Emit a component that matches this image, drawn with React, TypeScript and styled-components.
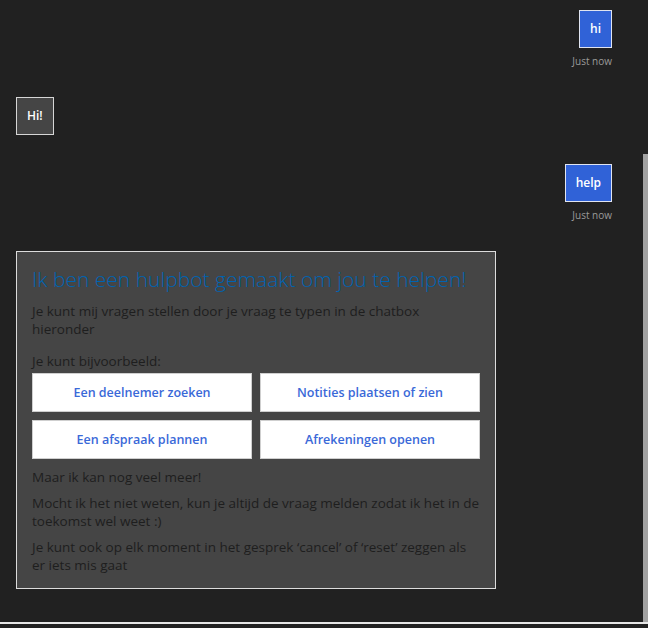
import React from "react";
import styled, { createGlobalStyle } from "styled-components";

const GlobalStyle = createGlobalStyle`
    html, body {
        margin: 0;
        padding: 0;
        background: #212121;
        font-family: "Open Sans", "Noto Sans", sans-serif;
    }
`;

const Page = styled.div`
    width: 648px;
    height: 628px;
    display: flex;
    flex-direction: column;
    overflow: hidden;
    background: #212121;
`;

const ChatLog = styled.div`
    position: relative;
    height: 622px;
    flex: 0 0 auto;
    display: flex;
    flex-direction: column;
    gap: 29px;
    padding: 10px 36px 0 16px;
    box-sizing: border-box;
    overflow: hidden;
`;

const ScrollThumb = styled.div`
    position: absolute;
    right: 0;
    top: 154px;
    bottom: 0;
    width: 5px;
    background: #a2a2a2;
`;

const InputBar = styled.div`
    flex: 1;
    border-top: 2px solid #e6e6e6;
    background: #222;
`;

const Group = styled.div<{ $fromUser?: boolean }>`
    display: flex;
    flex-direction: column;
    align-items: ${p => (p.$fromUser ? "flex-end" : "flex-start")};
`;

const Bubble = styled.div<{ $fromUser?: boolean }>`
    padding: 9px 10px;
    border: 1px solid ${p => (p.$fromUser ? "#e0e4f0" : "#d6d6d6")};
    background: ${p => (p.$fromUser ? "#3062d7" : "#454545")};
    color: #fff;
    font-size: 12px;
    font-weight: 600;
    line-height: 18px;
`;

const Timestamp = styled.div`
    margin-top: 7px;
    font-size: 10px;
    line-height: 13px;
    color: #9a9a9a;
`;

const Card = styled.div`
    width: 480px;
    box-sizing: border-box;
    padding: 13px 15px 14px;
    border: 1px solid #dcdcdc;
    background: #454545;
    color: #1e1e1e;
    font-size: 13.5px;
    line-height: 18px;
`;

const Heading = styled.div`
    color: #0063b1;
    font-size: 21px;
    font-weight: 300;
    line-height: 28px;
    margin-bottom: 9px;
`;

const Para = styled.p<{ $space?: number }>`
    margin: ${p => p.$space ?? 8}px 0 0;
`;

const ActionGrid = styled.div`
    display: grid;
    grid-template-columns: 1fr 1fr;
    gap: 8px;
    margin: 3px 0 9px;
`;

const ActionButton = styled.button`
    height: 39px;
    border: 1px solid #cfcfcf;
    background: #fff;
    color: #3a69d8;
    font-family: inherit;
    font-size: 12.5px;
    font-weight: 600;
    cursor: pointer;
`;

const actions = [
    "Een deelnemer zoeken",
    "Notities plaatsen of zien",
    "Een afspraak plannen",
    "Afrekeningen openen",
];

export default function App() {
    return (
        <Page>
            <GlobalStyle />
            <ChatLog>
                <Group $fromUser>
                    <Bubble $fromUser>hi</Bubble>
                    <Timestamp>Just now</Timestamp>
                </Group>
                <Group>
                    <Bubble>Hi!</Bubble>
                </Group>
                <Group $fromUser>
                    <Bubble $fromUser>help</Bubble>
                    <Timestamp>Just now</Timestamp>
                </Group>
                <Group>
                    <Card>
                        <Heading>Ik ben een hulpbot gemaakt om jou te helpen!</Heading>
                        <Para $space={0}>
                            Je kunt mij vragen stellen door je vraag te typen in de chatbox hieronder
                        </Para>
                        <Para $space={14}>Je kunt bijvoorbeeld:</Para>
                        <ActionGrid>
                            {actions.map(a => (
                                <ActionButton key={a}>{a}</ActionButton>
                            ))}
                        </ActionGrid>
                        <Para $space={0}>Maar ik kan nog veel meer!</Para>
                        <Para>
                            Mocht ik het niet weten, kun je altijd de vraag melden zodat ik het in de
                            toekomst wel weet :)
                        </Para>
                        <Para>
                            Je kunt ook op elk moment in het gesprek ‘cancel’ of ‘reset’ zeggen als
                            er iets mis gaat
                        </Para>
                    </Card>
                </Group>
                <ScrollThumb />
            </ChatLog>
            <InputBar />
        </Page>
    );
}
